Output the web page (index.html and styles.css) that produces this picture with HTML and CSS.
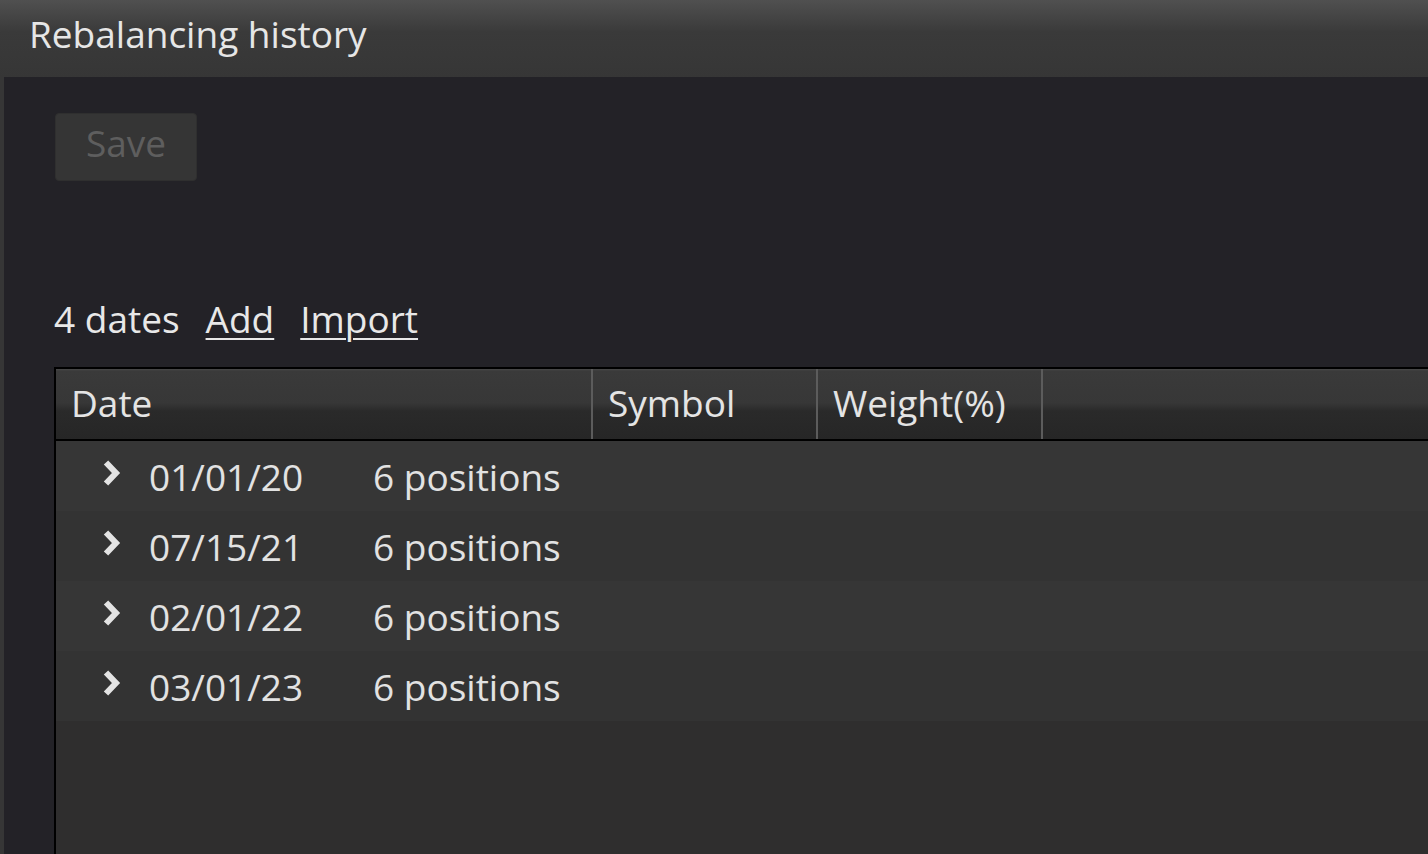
FILE: index.html
```html
<!DOCTYPE html>
<html>
<head>
<meta charset="utf-8">
<link rel="stylesheet" href="styles.css">
</head>
<body>
<div class="window">
  <header class="titlebar">Rebalancing history</header>
  <main class="content">
    <div class="toolbar"><button class="save-btn" disabled>Save</button></div>
    <div class="summary">
      <span class="count">4 dates</span>
      <a class="link">Add</a>
      <a class="link">Import</a>
    </div>
    <div class="table">
      <div class="thead">
        <div class="th th-date">Date</div>
        <div class="th th-symbol">Symbol</div>
        <div class="th th-weight">Weight(%)</div>
        <div class="th th-rest"></div>
      </div>
      <div class="tbody">
        <div class="row">
          <svg class="chev" viewBox="0 0 20 28"><path d="M4 3.5 L14 14 L4 24.5" /></svg>
          <span class="date">01/01/20</span><span class="pos">6 positions</span>
        </div>
        <div class="row">
          <svg class="chev" viewBox="0 0 20 28"><path d="M4 3.5 L14 14 L4 24.5" /></svg>
          <span class="date">07/15/21</span><span class="pos">6 positions</span>
        </div>
        <div class="row">
          <svg class="chev" viewBox="0 0 20 28"><path d="M4 3.5 L14 14 L4 24.5" /></svg>
          <span class="date">02/01/22</span><span class="pos">6 positions</span>
        </div>
        <div class="row">
          <svg class="chev" viewBox="0 0 20 28"><path d="M4 3.5 L14 14 L4 24.5" /></svg>
          <span class="date">03/01/23</span><span class="pos">6 positions</span>
        </div>
      </div>
    </div>
  </main>
</div>
</body>
</html>
```

FILE: styles.css
```css
* { box-sizing: border-box; }
html, body {
  margin: 0;
  padding: 0;
  width: 1428px;
  height: 854px;
  overflow: hidden;
  background: #232227;
  font-family: "Open Sans", Lato, sans-serif;
  color: #e4e4e4;
}
.window {
  display: flex;
  flex-direction: column;
  height: 854px;
}
.titlebar {
  height: 77px;
  flex: none;
  background: linear-gradient(to bottom, #505050 0px, #3a3a3a 32px, #363636 77px);
  font-size: 37px;
  line-height: 68px;
  padding-left: 29px;
  color: #e6e6e6;
}
.content {
  flex: 1;
  border-left: 4px solid #363636;
  padding: 36px 0 0 50px;
  display: flex;
  flex-direction: column;
  min-height: 0;
}
.toolbar { display: flex; }
.save-btn {
  width: 142px;
  height: 68px;
  margin-left: 1px;
  background: #353535;
  border: 1px solid #2f2f2f;
  border-radius: 4px;
  color: #5e5e5e;
  font-family: inherit;
  font-size: 37px;
  padding: 0 0 8px;
  line-height: 58px;
}
.summary {
  margin-top: 116px;
  display: flex;
  gap: 26px;
  font-size: 37px;
  line-height: 44px;
  color: #e8e8e8;
}
.link { text-decoration: underline; text-decoration-thickness: 2px; text-underline-offset: 5px; }
.table {
  margin-top: 26px;
  flex: 1;
  border-top: 2px solid #000;
  border-left: 2px solid #000;
  background: #2f2e2e;
  margin-right: -20px;
}
.thead {
  display: flex;
  height: 72px;
  border-bottom: 2px solid #000;
  background: linear-gradient(to bottom, #4a4a4a 0, #3a3a3a 2px, #373737 34px, #2a2a2a 42px, #262626 70px);
}
.th {
  font-size: 37px;
  line-height: 68px;
  padding-left: 15px;
  color: #e4e4e4;
  border-right: 2px solid #5c5c5c;
}
.th-date { width: 537px; }
.th-symbol { width: 225px; }
.th-weight { width: 225px; }
.th-rest { flex: 1; border-right: none; }
.row {
  height: 70px;
  display: flex;
  align-items: center;
  font-size: 37px;
  color: #e2e2e2;
  padding-left: 46px;
}
.row:nth-child(odd) { background: #363636; }
.row:nth-child(even) { background: #333333; }
.chev {
  width: 20px;
  height: 28px;
  margin-top: -6px;
  flex: none;
}
.chev path {
  fill: none;
  stroke: #e4e4e4;
  stroke-width: 6;
  stroke-linecap: butt;
  stroke-linejoin: miter;
}
.date { margin-left: 27px; width: 224px; }
.pos { }
```
